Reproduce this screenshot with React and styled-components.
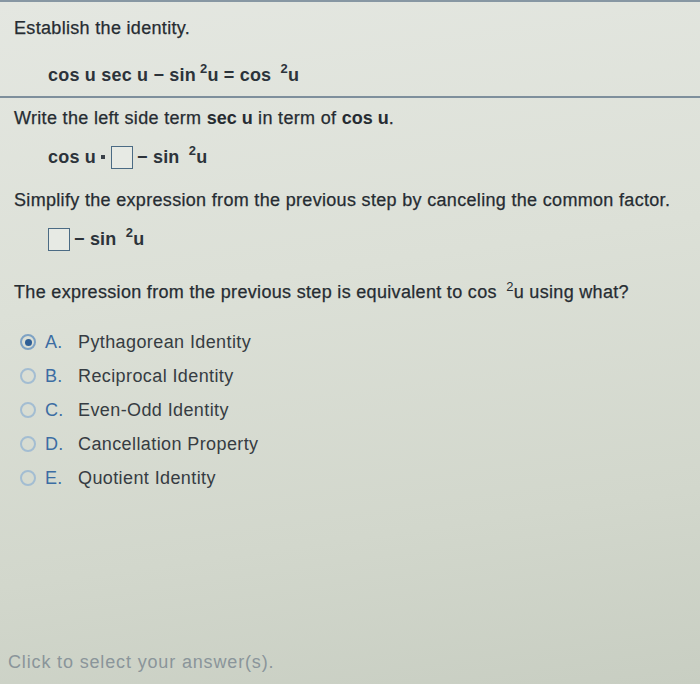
import React from "react";
import styled, { createGlobalStyle } from "styled-components";

const Global = createGlobalStyle`
  html, body { margin: 0; padding: 0; }
  body {
    font-family: "Liberation Sans", Arial, sans-serif;
    background: #d9ddd4;
  }
`;

const Page = styled.div`
  width: 700px;
  height: 684px;
  box-sizing: border-box;
  border-top: 2px solid #8797a3;
  background: linear-gradient(172deg, #e4e7e1 0%, #dce0d7 40%, #d2d7cc 75%, #c8cec2 100%);
  display: flex;
  flex-direction: column;
  color: #262c32;
  font-size: 18px;
  overflow: hidden;
`;

const Text = styled.div`
  line-height: 22px;
  height: 22px;
  padding-left: 14px;
  margin-top: ${(p) => p.$mt}px;
  white-space: nowrap;
  letter-spacing: 0.32px;
  -webkit-text-stroke: 0.25px #262c32;
`;

const Term = styled.span`
  font-weight: bold;
  letter-spacing: 0px;
  -webkit-text-stroke: 0;
`;

const MathLine = styled.div`
  display: flex;
  align-items: center;
  height: 24px;
  padding-left: 48px;
  margin-top: ${(p) => p.$mt}px;
  white-space: pre;
  font-weight: bold;
  color: #2c333a;
  letter-spacing: 0.2px;
`;

const Sup = styled.span`
  font-size: 13px;
  position: relative;
  top: -7px;
  margin-left: 4px;
  font-weight: ${(p) => (p.$bold ? "bold" : "normal")};
  -webkit-text-stroke: 0;
`;

const Dot = styled.span`
  display: inline-block;
  width: 4px;
  height: 4px;
  background: #3a4148;
  margin: 0 6px 0 5px;
`;

const Box = styled.span`
  display: inline-block;
  box-sizing: border-box;
  width: 22px;
  height: 23px;
  border: 1.5px solid #4b6b84;
  background: #e7eae4;
  margin-right: 4px;
`;

const Divider = styled.div`
  height: 2px;
  background: #7e8f9c;
  margin-top: ${(p) => p.$mt}px;
`;

const Options = styled.div`
  display: flex;
  flex-direction: column;
  margin-top: 22px;
  padding-left: 20px;
`;

const Option = styled.div`
  display: flex;
  align-items: center;
  height: 34px;
`;

const Radio = styled.span`
  box-sizing: border-box;
  width: 16px;
  height: 16px;
  border-radius: 50%;
  border: 2px solid ${(p) => (p.$checked ? "#7ea2c4" : "#a3bdd2")};
  display: flex;
  align-items: center;
  justify-content: center;
  margin-right: 9px;
  &::after {
    content: "";
    width: 7px;
    height: 7px;
    border-radius: 50%;
    background: ${(p) => (p.$checked ? "#2f5f96" : "transparent")};
  }
`;

const Letter = styled.span`
  width: 33px;
  color: #3c6da3;
  letter-spacing: 0.3px;
`;

const Label = styled.span`
  color: #363c42;
  letter-spacing: 0.4px;
`;

const Footer = styled.div`
  margin-top: auto;
  margin-bottom: 11px;
  padding-left: 8px;
  line-height: 22px;
  color: #8a959a;
  letter-spacing: 0.85px;
`;

const options = [
  ["A.", "Pythagorean Identity", true],
  ["B.", "Reciprocal Identity"],
  ["C.", "Even-Odd Identity"],
  ["D.", "Cancellation Property"],
  ["E.", "Quotient Identity"],
];

export default function App() {
  return (
    <Page>
      <Global />
      <Text $mt={15}>Establish the identity.</Text>
      <MathLine $mt={24}>
        {"cos u sec u − sin"}<Sup $bold>2</Sup>{"u = cos "}<Sup $bold>2</Sup>u
      </MathLine>
      <Divider $mt={9} />
      <Text $mt={9}>
        Write the left side term <Term>sec u</Term> in term of <Term>cos u</Term>.
      </Text>
      <MathLine $mt={16}>
        cos u<Dot />
        <Box />{"− sin "}<Sup $bold>2</Sup>u
      </MathLine>
      <Text $mt={20}>Simplify the expression from the previous step by canceling the common factor.</Text>
      <MathLine $mt={16}>
        <Box />{"− sin "}<Sup $bold>2</Sup>u
      </MathLine>
      <Text $mt={30}>
        The expression from the previous step is equivalent to cos <Sup>2</Sup>u using what?
      </Text>
      <Options>
        {options.map(([l, t, c]) => (
          <Option key={l}>
            <Radio $checked={c} />
            <Letter>{l}</Letter>
            <Label>{t}</Label>
          </Option>
        ))}
      </Options>
      <Footer>Click to select your answer(s).</Footer>
    </Page>
  );
}
